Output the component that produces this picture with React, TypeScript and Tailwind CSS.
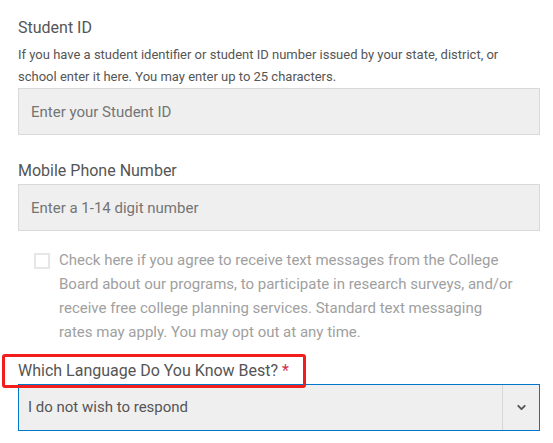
import { ChevronDown } from "lucide-react";

// Profile form section: student ID, phone, SMS consent and language picker
function FieldLabel({ children }: { children: React.ReactNode }) {
  return <label className="block text-[16px] leading-[20px] text-[#555]">{children}</label>;
}

function TextField({ placeholder }: { placeholder: string }) {
  return (
    <input
      readOnly
      placeholder={placeholder}
      className="block w-full h-[47px] px-[12px] bg-[#efefef] border border-[#d9d9d9] text-[15px] text-[#555] placeholder:text-[#757575] outline-none"
    />
  );
}

export default function App() {
  return (
    <div className="w-[553px] h-[443px] overflow-hidden bg-white pl-[18px] pr-[13px] pt-[18px] font-['Roboto',sans-serif]">
      <FieldLabel>Student ID</FieldLabel>
      <p className="mt-[6px] text-[13px] leading-[22px] text-[#555]">
        If you have a student identifier or student ID number issued by your state, district, or school enter it here. You
        may enter up to 25 characters.
      </p>
      <TextField placeholder="Enter your Student ID" />

      <div className="mt-[26px]">
        <FieldLabel>Mobile Phone Number</FieldLabel>
      </div>
      <div className="mt-[3px]">
        <TextField placeholder="Enter a 1-14 digit number" />
      </div>

      {/* SMS consent */}
      <label className="mt-[17px] flex items-start gap-[9px] pl-[16px]">
        <span className="mt-[5px] w-[16px] h-[16px] shrink-0 border-2 border-[#e6e6e6] bg-white" />
        <span className="whitespace-nowrap text-[15px] leading-[24px] text-[#a0a0a0]">
          Check here if you agree to receive text messages from the College
          <br />
          Board about our programs, to participate in research surveys, and/or
          <br />
          receive free college planning services. Standard text messaging
          <br />
          rates may apply. You may opt out at any time.
        </span>
      </label>

      {/* Language picker */}
      <div className="relative mt-[17px]">
        <span className="absolute -left-[16px] -top-[7px] w-[304px] h-[34px] border-[3px] border-[#f21d1d] rounded-[3px] pointer-events-none" />
        <FieldLabel>
          Which Language Do You Know Best?<span className="ml-[4px] text-[#d0314b]">*</span>
        </FieldLabel>
      </div>
      <div className="mt-[3px] flex h-[47px] border border-[#0077c8] bg-[#efefef]">
        <div className="flex-1 flex items-center px-[9px] text-[15px] text-[#555]">I do not wish to respond</div>
        <div className="w-[37px] flex items-center justify-center border-l border-[#d6d6d6]">
          <ChevronDown size={13} strokeWidth={3.5} className="text-[#555]" />
        </div>
      </div>
    </div>
  );
}
